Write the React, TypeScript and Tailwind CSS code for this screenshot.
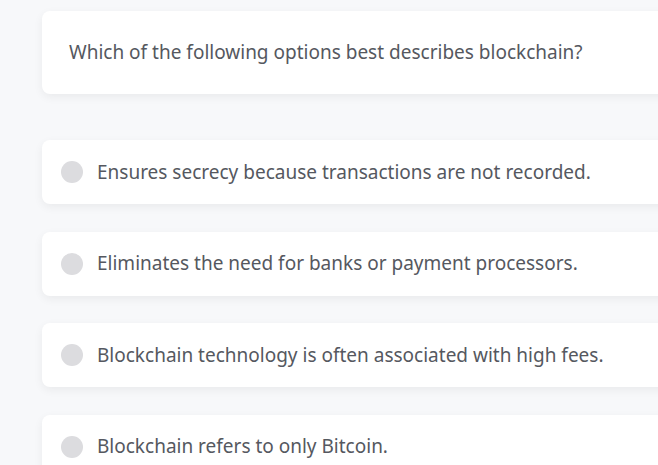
import React from "react";

const options = [
  "Ensures secrecy because transactions are not recorded.",
  "Eliminates the need for banks or payment processors.",
  "Blockchain technology is often associated with high fees.",
  "Blockchain refers to only Bitcoin.",
];

export default function App() {
  return (
    <div
      className="min-h-[465px] w-[658px] overflow-hidden bg-[#f7f8fa] pl-[42px] pt-[11px] text-[#555860]"
      style={{ fontFamily: '"Noto Sans", "Open Sans", sans-serif' }}
    >
      <div className="w-[680px]">
        <div className="flex h-[83px] items-center rounded-lg bg-white pl-[27px] text-[19px] shadow-[0_3px_10px_rgba(0,0,0,0.06)]">
          Which of the following options best describes blockchain?
        </div>
        <div className="mt-[46px] flex flex-col gap-[27.5px]">
          {options.map((o) => (
            <div
              key={o}
              className="flex h-[64px] items-center gap-[14px] rounded-lg bg-white pl-[19px] text-[19px] shadow-[0_3px_10px_rgba(0,0,0,0.06)]"
            >
              <span className="h-[22px] w-[22px] shrink-0 rounded-full bg-[#dcdcdf]" />
              <span>{o}</span>
            </div>
          ))}
        </div>
      </div>
    </div>
  );
}
